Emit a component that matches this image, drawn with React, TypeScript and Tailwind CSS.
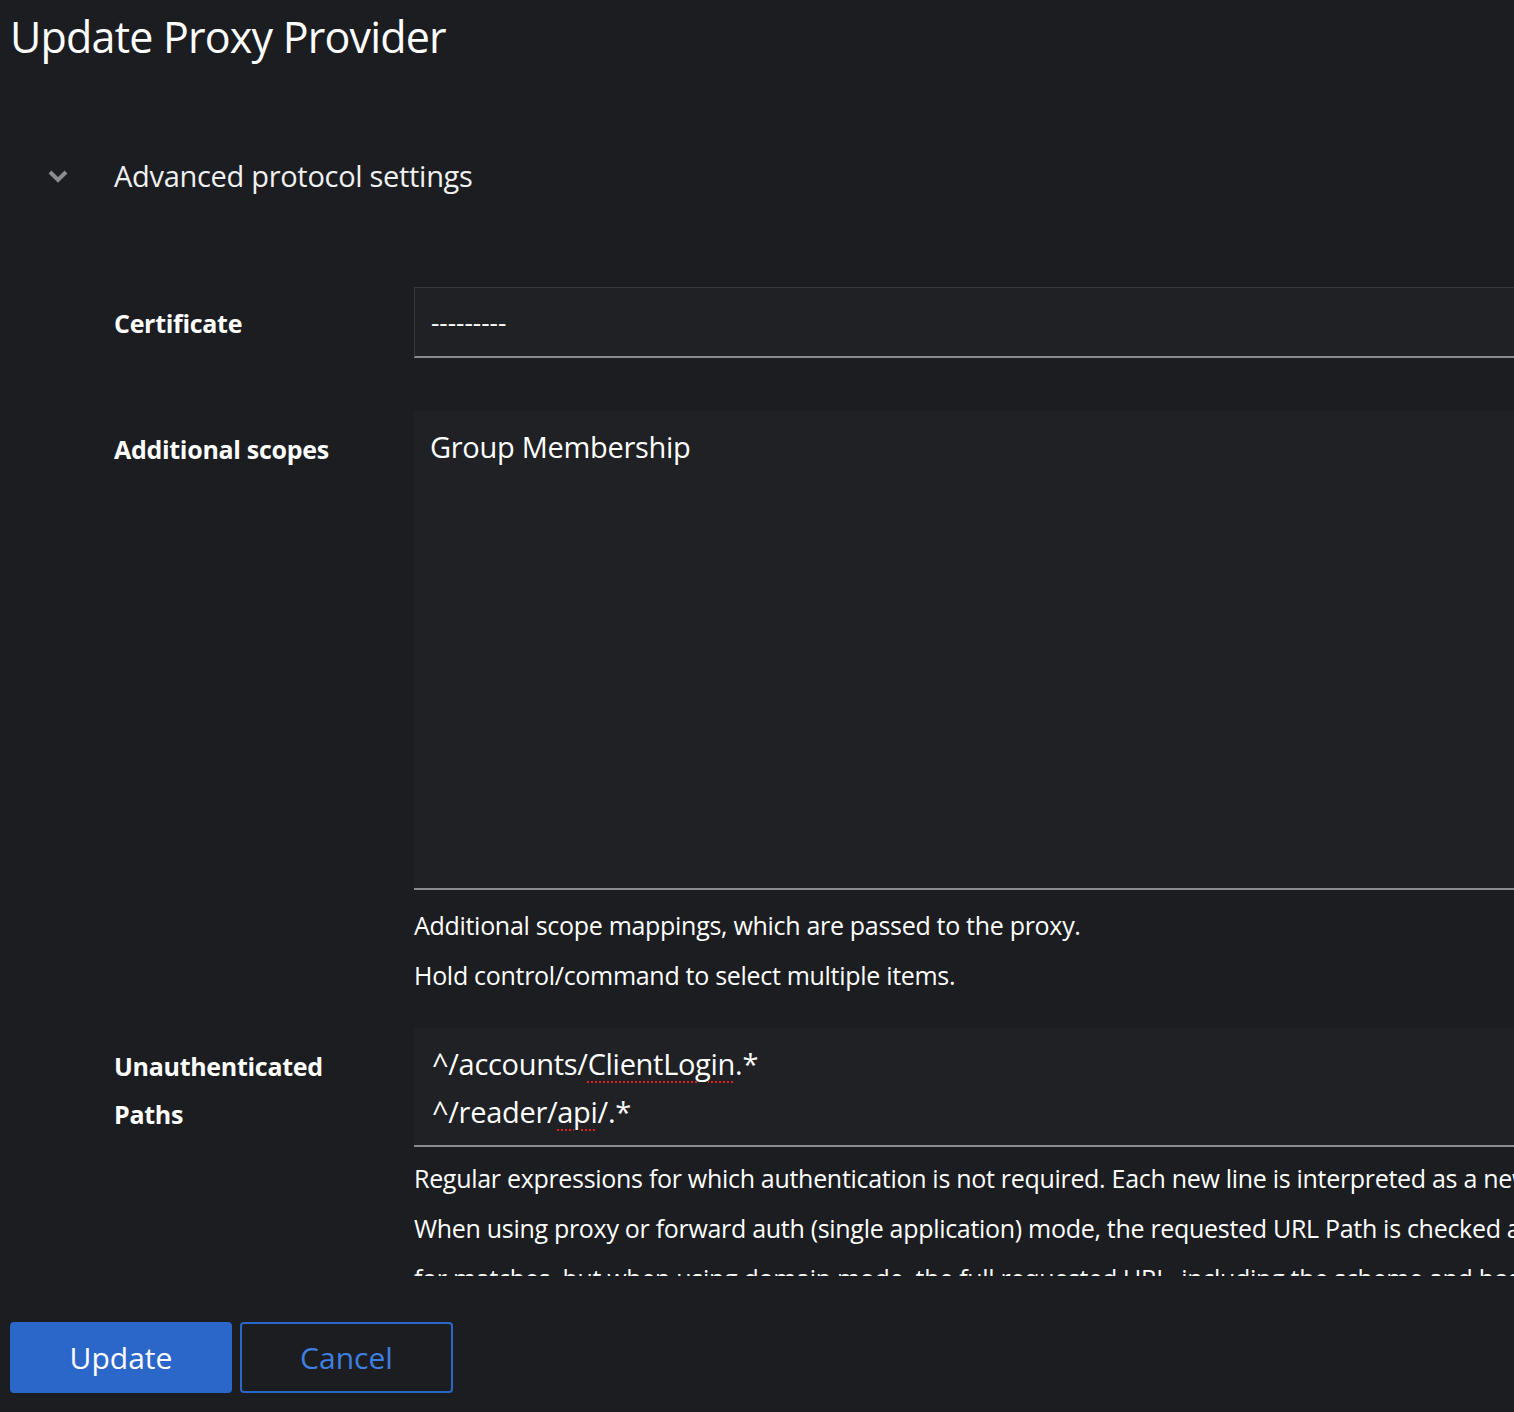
export default function App() {
  const font = { fontFamily: '"Open Sans", Lato, sans-serif' };
  return (
    <div className="w-[1514px] h-[1412px] overflow-hidden bg-[#1b1d21] text-white flex flex-col" style={font}>
      <div className="h-[1276px] overflow-hidden">
        <h1 className="pl-[10px] pt-[8px] text-[43px] leading-[58px] font-medium tracking-[-0.8px]">Update Proxy Provider</h1>
        <div className="flex items-center mt-[80px] h-[60px]">
          <div className="w-[114px] shrink-0 pl-[47px]">
            <svg width="22" height="14" viewBox="0 0 22 14"><path d="M3 3l8 8 8-8" stroke="#8a8d90" strokeWidth="4" fill="none" /></svg>
          </div>
          <span className="text-[29px] text-[#f0f0f0] tracking-[-0.3px]">Advanced protocol settings</span>
        </div>
        <div className="pl-[114px] mt-[81px] flex flex-col">
          <div className="flex items-start">
            <div className="w-[300px] shrink-0 pt-[18px] text-[25px] font-bold leading-[36px] tracking-[-0.3px]">Certificate</div>
            <div className="w-[1200px] shrink-0 h-[71px] bg-[#1f2125] border border-[#36393e] border-b-2 border-b-[#8a8d90] flex items-center pl-[16px] text-[26px]">---------</div>
          </div>
          <div className="flex items-start mt-[53px]">
            <div className="w-[300px] shrink-0 pt-[20px] text-[25px] font-bold leading-[36px] tracking-[-0.3px] whitespace-nowrap">Additional scopes</div>
            <div className="w-[1200px] shrink-0">
              <div className="h-[479px] bg-[#1f2125] border-b-2 border-b-[#8a8d90] pl-[16px] pt-[16px] text-[29px] leading-[40px] tracking-[-0.3px]">Group Membership</div>
              <div className="mt-[10px] text-[25px] leading-[50px] whitespace-nowrap tracking-[-0.3px]">
                <div>Additional scope mappings, which are passed to the proxy.</div>
                <div>Hold control/command to select multiple items.</div>
              </div>
            </div>
          </div>
          <div className="flex items-start mt-[28px]">
            <div className="w-[300px] shrink-0 pt-[14px] text-[25px] font-bold leading-[48px] tracking-[-0.3px]">Unauthenticated<br />Paths</div>
            <div className="w-[1200px] shrink-0">
              <div className="h-[119px] bg-[#1f2125] border-b-2 border-b-[#8a8d90] pl-[18px] pt-[12px] text-[29px] leading-[48px] tracking-[-0.3px]">
                <div>^/accounts/<span className="underline decoration-dotted decoration-[#e02020] decoration-2 underline-offset-[6px]">ClientLogin</span>.*</div>
                <div>^/reader/<span className="underline decoration-dotted decoration-[#e02020] decoration-2 underline-offset-[6px]">api</span>/.*</div>
              </div>
              <div className="mt-[6px] text-[25px] leading-[50px] whitespace-nowrap tracking-[-0.3px]">
                <div>Regular expressions for which authentication is not required. Each new line is interpreted as a new expression.</div>
                <div>When using proxy or forward auth (single application) mode, the requested URL Path is checked against the regular expressions.</div>
                <div>for matches, but when using domain mode, the full requested URL, including the scheme and host, is used.</div>
              </div>
            </div>
          </div>
        </div>
      </div>
      <div className="flex gap-[8px] pl-[10px] mt-[46px]">
        <button className="w-[222px] h-[71px] rounded-[4px] bg-[#2b66c9] text-[30px] text-white">Update</button>
        <button className="w-[213px] h-[71px] rounded-[4px] border-2 border-[#2b66c9] text-[30px] text-[#3f7fe0]">Cancel</button>
      </div>
    </div>
  );
}
